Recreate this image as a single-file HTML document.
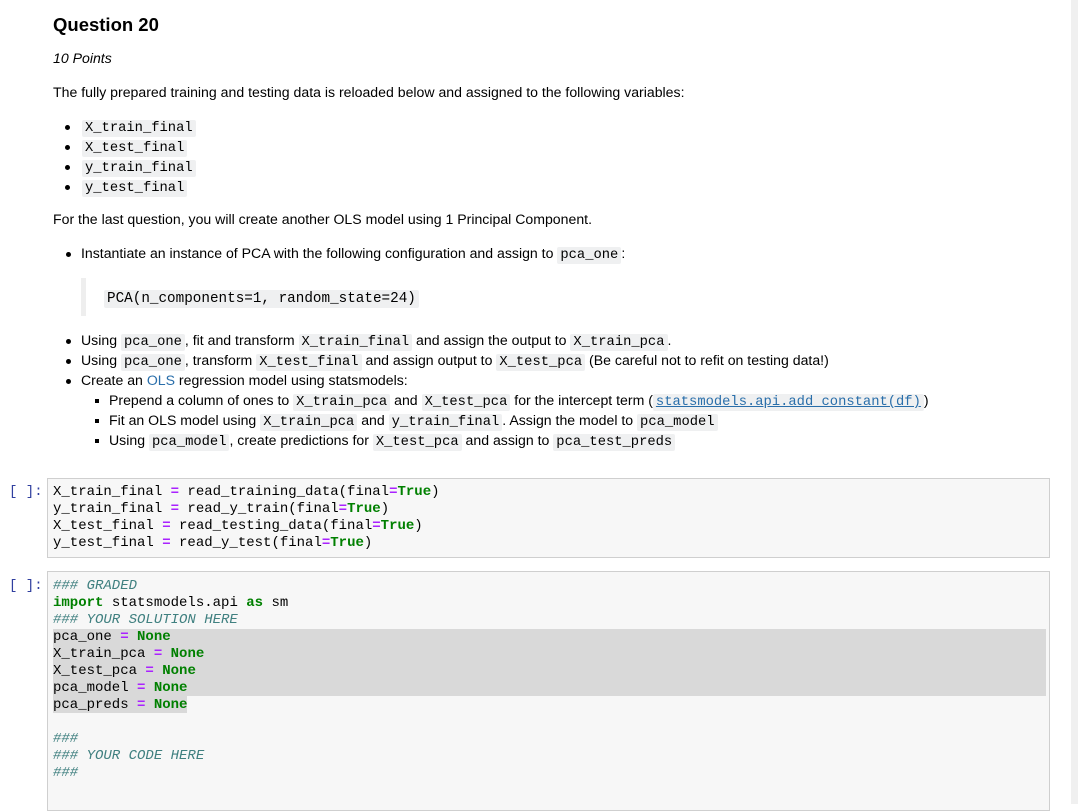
<!DOCTYPE html>
<html><head><meta charset="utf-8"><style>
*{margin:0;padding:0;box-sizing:border-box}
body{width:1078px;height:804px;background:#fff;position:relative;overflow:hidden;font-family:"Liberation Sans",Arial,sans-serif;font-size:14.1px;color:#000}
.a{position:absolute;white-space:pre;line-height:20px}
code,.m{font-family:"Liberation Mono",monospace;font-size:13.8px}
code{background:#eff0f1;padding:1px 3px;border-radius:2px}
.b{position:absolute;width:5px;height:5px;border-radius:50%;background:#000}
.s{position:absolute;width:4px;height:4px;background:#000}
.cell{position:absolute;left:47px;right:28px;background:#f7f7f7;border:1px solid #cfcfcf}
.p{position:absolute;left:9px;font-family:"Liberation Mono",monospace;font-size:14px;color:#303f9f}
.l{position:absolute;left:53px;font-family:"Liberation Mono",monospace;font-size:14px;line-height:17px;white-space:pre}
.k{color:#008000;font-weight:bold}
.o{color:#aa22ff;font-weight:bold}
.c{color:#408080;font-style:italic}
a{color:#296eaa}
</style></head><body>
<div style="position:absolute;right:0;top:0;width:7px;height:804px;background:#f0f0f0"></div>
<div class="a" style="left:53px;top:13px;font-size:18.5px;font-weight:bold;line-height:24px">Question 20</div>
<div class="a" style="left:53px;top:48px;font-style:italic">10 Points</div>
<div class="a" style="left:53px;top:82px">The fully prepared training and testing data is reloaded below and assigned to the following variables:</div>
<div class="b" style="left:65px;top:125px"></div><div class="a" style="left:82px;top:116px"><code>X_train_final</code></div>
<div class="b" style="left:65px;top:145px"></div><div class="a" style="left:82px;top:136px"><code>X_test_final</code></div>
<div class="b" style="left:65px;top:165px"></div><div class="a" style="left:82px;top:156px"><code>y_train_final</code></div>
<div class="b" style="left:65px;top:185px"></div><div class="a" style="left:82px;top:176px"><code>y_test_final</code></div>
<div class="a" style="left:53px;top:209px">For the last question, you will create another OLS model using 1 Principal Component.</div>
<div class="b" style="left:66px;top:252px"></div><div class="a" style="left:81px;top:243px">Instantiate an instance of PCA with the following configuration and assign to <code>pca_one</code>:</div>
<div style="position:absolute;left:81px;top:278px;width:5px;height:38px;background:#eee"></div>
<div class="a" style="left:104px;top:287px"><code style="font-size:14.3px">PCA(n_components=1, random_state=24)</code></div>
<div class="b" style="left:66px;top:339px"></div><div class="a" style="left:81px;top:330px">Using <code>pca_one</code>, fit and transform <code>X_train_final</code> and assign the output to <code>X_train_pca</code>.</div>
<div class="b" style="left:66px;top:359px"></div><div class="a" style="left:81px;top:350px">Using <code>pca_one</code>, transform <code>X_test_final</code> and assign output to <code>X_test_pca</code> (Be careful not to refit on testing data!)</div>
<div class="b" style="left:66px;top:379px"></div><div class="a" style="left:81px;top:370px">Create an <a>OLS</a> regression model using statsmodels:</div>
<div class="s" style="left:95px;top:399px"></div><div class="a" style="left:109px;top:390px">Prepend a column of ones to <code>X_train_pca</code> and <code>X_test_pca</code> for the intercept term (<code style="color:#296eaa;text-decoration:underline">statsmodels.api.add_constant(df)</code>)</div>
<div class="s" style="left:95px;top:419px"></div><div class="a" style="left:109px;top:410px">Fit an OLS model using <code>X_train_pca</code> and <code>y_train_final</code>. Assign the model to <code>pca_model</code></div>
<div class="s" style="left:95px;top:439px"></div><div class="a" style="left:109px;top:430px">Using <code>pca_model</code>, create predictions for <code>X_test_pca</code> and assign to <code>pca_test_preds</code></div>

<div class="cell" style="top:478px;height:80px"></div>
<div class="p" style="top:484px">[ ]:</div>
<div class="l" style="top:484px">X_train_final <span class="o">=</span> read_training_data(final<span class="o">=</span><span class="k">True</span>)
y_train_final <span class="o">=</span> read_y_train(final<span class="o">=</span><span class="k">True</span>)
X_test_final <span class="o">=</span> read_testing_data(final<span class="o">=</span><span class="k">True</span>)
y_test_final <span class="o">=</span> read_y_test(final<span class="o">=</span><span class="k">True</span>)</div>

<div class="cell" style="top:571px;height:240px"></div>
<div style="position:absolute;left:53px;top:629px;width:993px;height:67px;background:#d9d9d9"></div>
<div style="position:absolute;left:53px;top:696px;width:134px;height:17px;background:#d9d9d9"></div>
<div class="p" style="top:578px">[ ]:</div>
<div class="l" style="top:578px"><span class="c">### GRADED</span>
<span class="k">import</span> statsmodels.api <span class="k">as</span> sm
<span class="c">### YOUR SOLUTION HERE</span>
pca_one <span class="o">=</span> <span class="k">None</span>
X_train_pca <span class="o">=</span> <span class="k">None</span>
X_test_pca <span class="o">=</span> <span class="k">None</span>
pca_model <span class="o">=</span> <span class="k">None</span>
pca_preds <span class="o">=</span> <span class="k">None</span>

<span class="c">###</span>
<span class="c">### YOUR CODE HERE</span>
<span class="c">###</span></div>
</body></html>
